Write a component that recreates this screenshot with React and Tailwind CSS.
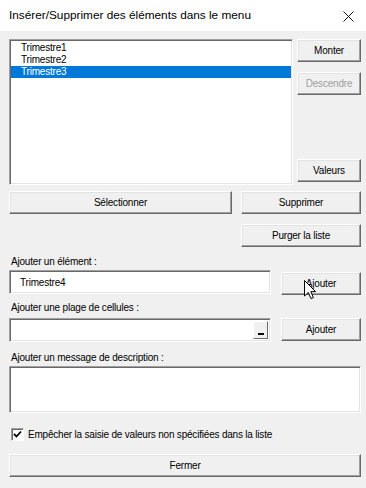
import React from 'react';

const ui = { fontFamily: '"Liberation Sans", Arial, sans-serif' };

function Btn({ children, className = '', disabled = false }) {
  return (
    <div
      className={`flex h-[23px] items-center justify-center border border-t-white border-l-white border-r-[#696969] border-b-[#696969] bg-[#f0f0f0] text-[10px] tracking-[-0.2px] shadow-[inset_-1px_-1px_0_#a0a0a0,inset_1px_1px_0_#e3e3e3] ${
        disabled ? 'text-[#a0a0a0]' : 'text-black'
      } ${className}`}
    >
      {children}
    </div>
  );
}

function Sunken({ className = '', children }) {
  return (
    <div
      className={`border border-t-[#a0a0a0] border-l-[#a0a0a0] border-r-white border-b-white bg-white shadow-[inset_1px_1px_0_#696969,inset_-1px_-1px_0_#e3e3e3] ${className}`}
    >
      {children}
    </div>
  );
}

function Cursor() {
  return (
    <svg className="absolute left-[23px] top-[8px]" width="13" height="20" viewBox="0 0 13 20">
      <path
        d="M0.5 0.5 L0.5 16 L4.3 12.4 L7 18.6 L9.4 17.6 L6.8 11.6 L11.6 11.6 Z"
        fill="white"
        stroke="black"
        strokeWidth="1"
      />
    </svg>
  );
}

export default function App() {
  return (
    <div style={ui} className="flex h-[488px] w-[366px] flex-col overflow-hidden bg-[#f0f0f0] text-black">
      <div className="flex h-[31px] shrink-0 items-center justify-between bg-white pl-[9px] pr-[12px] pt-[1px]">
        <span className="text-[11.8px] leading-none text-black">Insérer/Supprimer des éléments dans le menu</span>
        <svg width="11" height="11" viewBox="0 0 11 11">
          <path d="M0.5 0.5 L10.5 10.5 M10.5 0.5 L0.5 10.5" stroke="#111" strokeWidth="1" />
        </svg>
      </div>

      <div className="flex flex-col pl-[9px] pr-[5px] pt-[8px] text-[10px] tracking-[-0.2px]">
        <div className="flex gap-[4px]">
          <Sunken className="h-[146px] w-[284px] px-[1px] pt-[2px]">
            <div className="flex h-[12px] items-center pl-[10px] leading-none">Trimestre1</div>
            <div className="flex h-[12px] items-center pl-[10px] leading-none">Trimestre2</div>
            <div className="flex h-[12px] items-center bg-[#0078d7] pl-[10px] leading-none text-white">Trimestre3</div>
          </Sunken>
          <div className="flex w-[64px] flex-col">
            <Btn>Monter</Btn>
            <Btn className="mt-[10px]" disabled>
              Descendre
            </Btn>
            <Btn className="mb-[3px] mt-auto">Valeurs</Btn>
          </div>
        </div>

        <div className="mt-[6px] flex gap-[9px]">
          <Btn className="w-[223px]">Sélectionner</Btn>
          <Btn className="w-[120px]">Supprimer</Btn>
        </div>

        <div className="mt-[10px] flex justify-end">
          <Btn className="w-[120px]">Purger la liste</Btn>
        </div>

        <div className="mt-[8px] h-[13px] pl-[2px] leading-[13px]">Ajouter un élément :</div>
        <div className="mt-[2px] flex items-start gap-[10px]">
          <Sunken className="flex h-[24px] w-[262px] items-center pl-[10px]">Trimestre4</Sunken>
          <div className="relative mt-[2px]">
            <Btn className="w-[80px]">Ajouter</Btn>
            <Cursor />
          </div>
        </div>

        <div className="mt-[6px] h-[13px] pl-[2px] leading-[13px]">Ajouter une plage de cellules :</div>
        <div className="mt-[4px] flex items-start gap-[10px]">
          <Sunken className="flex h-[24px] w-[262px] justify-end p-[2px]">
            <div className="flex h-[18px] w-[15px] items-end justify-center border border-t-white border-l-white border-r-[#696969] border-b-[#696969] bg-[#f0f0f0] pb-[3px]">
              <div className="h-[2px] w-[6px] bg-black" />
            </div>
          </Sunken>
          <Btn className="w-[80px]">Ajouter</Btn>
        </div>

        <div className="mt-[9px] h-[13px] pl-[2px] leading-[13px]">Ajouter un message de description :</div>
        <Sunken className="mt-[2px] h-[47px] w-[352px]" />

        <div className="mt-[15px] flex items-center gap-[4px] pl-[2px]">
          <div className="flex h-[13px] w-[13px] items-center justify-center border border-t-[#a0a0a0] border-l-[#a0a0a0] border-r-white border-b-white bg-white shadow-[inset_1px_1px_0_#696969]">
            <svg width="9" height="9" viewBox="0 0 9 9">
              <path d="M1 4 L3.5 6.5 L8 1.5" fill="none" stroke="black" strokeWidth="1.8" />
            </svg>
          </div>
          <span className="leading-none">Empêcher la saisie de valeurs non spécifiées dans la liste</span>
        </div>

        <Btn className="mt-[13px] w-[352px]">Fermer</Btn>
      </div>
    </div>
  );
}
